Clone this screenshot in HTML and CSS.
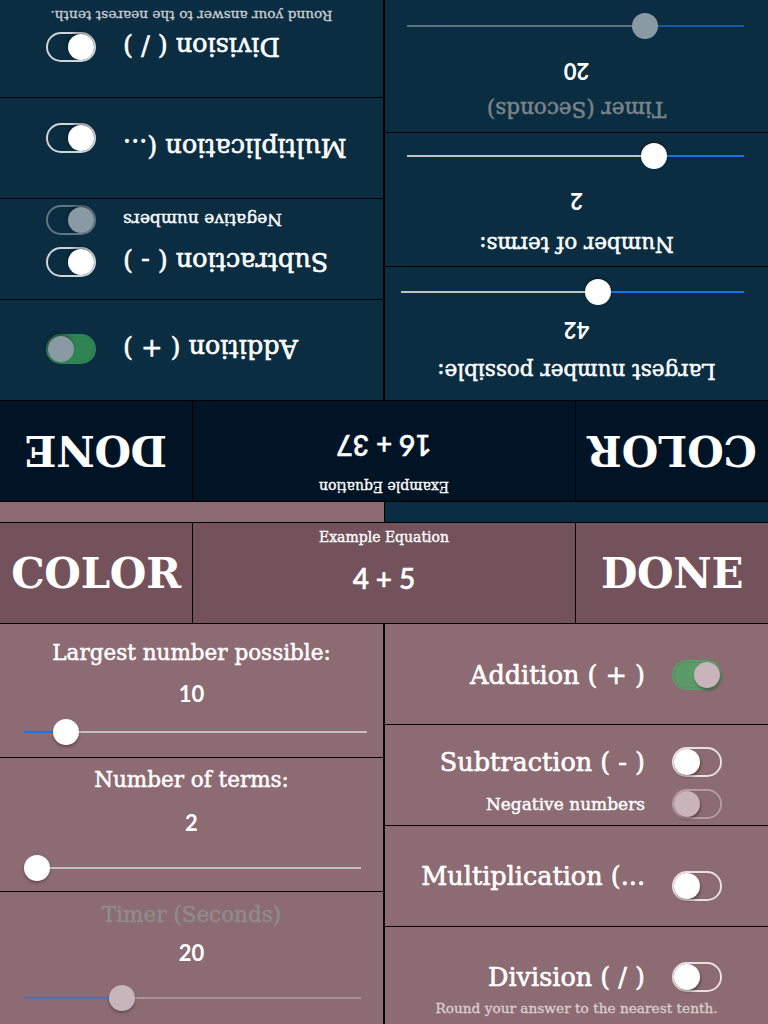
FILE: index.html
```html
<!DOCTYPE html>
<html>
<head>
<meta charset="utf-8">
<link rel="stylesheet" href="styles.css">
</head>
<body>
<div class="screen">
  <div class="half half--top">
    <div class="header">
      <div class="hbtn">COLOR</div>
      <div class="heq"><div class="heq-label">Example Equation</div><div class="heq-value">16 + 37</div></div>
      <div class="hbtn">DONE</div>
    </div>
    <div class="body">
      <div class="col col--sliders">
        <div class="scell scell--a">
          <div class="slabel">Largest number possible:</div>
          <div class="svalue">42</div>
          <div class="slider slider--wide"><div class="track"></div><div class="fill" style="width:146px"></div><div class="thumb" style="left:146px"></div></div>
        </div>
        <div class="scell scell--b">
          <div class="slabel">Number of terms:</div>
          <div class="svalue">2</div>
          <div class="slider"><div class="track"></div><div class="fill" style="width:90px"></div><div class="thumb" style="left:90px"></div></div>
        </div>
        <div class="scell scell--c">
          <div class="slabel slabel--off">Timer (Seconds)</div>
          <div class="svalue">20</div>
          <div class="slider slider--off"><div class="track"></div><div class="fill" style="width:99px"></div><div class="thumb" style="left:99px"></div></div>
        </div>
      </div>
      <div class="col col--toggles">
        <div class="tcell tcell--add">
          <div class="trow"><span class="tlabel">Addition ( + )</span><span class="toggle toggle--on"><span class="knob"></span></span></div>
        </div>
        <div class="tcell tcell--sub">
          <div class="trow"><span class="tlabel">Subtraction ( - )</span><span class="toggle"><span class="knob"></span></span></div>
          <div class="trow trow--sub"><span class="tsub">Negative numbers</span><span class="toggle toggle--off"><span class="knob"></span></span></div>
        </div>
        <div class="tcell tcell--mul">
          <div class="trow trow--mul"><span class="tlabel">Multiplication (...</span><span class="toggle"><span class="knob"></span></span></div>
        </div>
        <div class="tcell tcell--div">
          <div class="trow"><span class="tlabel">Division ( / )</span><span class="toggle"><span class="knob"></span></span></div>
          <div class="tnote">Round your answer to the nearest tenth.</div>
        </div>
      </div>
    </div>
  </div>

  <div class="seam"><div class="seam-l"></div><div class="seam-r"></div></div>

  <div class="half half--bottom">
    <div class="header">
      <div class="hbtn">COLOR</div>
      <div class="heq"><div class="heq-label">Example Equation</div><div class="heq-value">4 + 5</div></div>
      <div class="hbtn">DONE</div>
    </div>
    <div class="body">
      <div class="col col--sliders">
        <div class="scell scell--a">
          <div class="slabel">Largest number possible:</div>
          <div class="svalue">10</div>
          <div class="slider slider--wide"><div class="track"></div><div class="fill" style="width:42px"></div><div class="thumb" style="left:42px"></div></div>
        </div>
        <div class="scell scell--b">
          <div class="slabel">Number of terms:</div>
          <div class="svalue">2</div>
          <div class="slider"><div class="track"></div><div class="fill" style="width:13px"></div><div class="thumb" style="left:13px"></div></div>
        </div>
        <div class="scell scell--c">
          <div class="slabel slabel--off">Timer (Seconds)</div>
          <div class="svalue">20</div>
          <div class="slider slider--off"><div class="track"></div><div class="fill" style="width:98px"></div><div class="thumb" style="left:98px"></div></div>
        </div>
      </div>
      <div class="col col--toggles">
        <div class="tcell tcell--add">
          <div class="trow"><span class="tlabel">Addition ( + )</span><span class="toggle toggle--on"><span class="knob"></span></span></div>
        </div>
        <div class="tcell tcell--sub">
          <div class="trow"><span class="tlabel">Subtraction ( - )</span><span class="toggle"><span class="knob"></span></span></div>
          <div class="trow trow--sub"><span class="tsub">Negative numbers</span><span class="toggle toggle--off"><span class="knob"></span></span></div>
        </div>
        <div class="tcell tcell--mul">
          <div class="trow trow--mul"><span class="tlabel">Multiplication (...</span><span class="toggle"><span class="knob"></span></span></div>
        </div>
        <div class="tcell tcell--div">
          <div class="trow"><span class="tlabel">Division ( / )</span><span class="toggle"><span class="knob"></span></span></div>
          <div class="tnote">Round your answer to the nearest tenth.</div>
        </div>
      </div>
    </div>
  </div>
</div>
</body>
</html>
```

FILE: styles.css
```css
* { box-sizing: border-box; margin: 0; padding: 0; }

html, body {
  width: 768px;
  height: 1024px;
  overflow: hidden;
}

body {
  font-family: "DejaVu Serif", "Liberation Serif", serif;
  color: #fff;
}

.screen {
  display: flex;
  flex-direction: column;
  height: 1024px;
}

.half {
  height: 502px;
  overflow: hidden;
  flex: none;
}

.half--top {
  transform: rotate(180deg);
  background: #0b2d41;
}

.half--bottom {
  background: #8d6b73;
}

.seam {
  height: 20px;
  display: flex;
  flex: none;
}

.seam-l {
  width: 384px;
  background: #8d6b73;
}

.seam-r {
  flex: 1;
  background: #0b2d41;
  border-left: 1px solid #000;
}

/* header */
.header {
  display: flex;
  height: 102px;
  border-top: 1px solid #000;
  border-bottom: 1px solid #000;
}

.half--top .header { background: #011426; }
.half--bottom .header { background: #74525b; }

.hbtn {
  width: 192px;
  display: flex;
  align-items: center;
  justify-content: center;
  font-size: 42px;
  font-weight: bold;
  letter-spacing: -0.3px;
}

.heq {
  width: 384px;
  border-left: 1px solid #000;
  border-right: 1px solid #000;
  display: flex;
  flex-direction: column;
  align-items: center;
  padding-top: 6px;
}

.heq-label {
  font-size: 14px;
  line-height: 16px;
  -webkit-text-stroke: 0.35px currentColor;
}

.heq-value {
  font-family: "Lato", "DejaVu Sans", sans-serif;
  font-weight: 600;
  font-size: 28px;
  line-height: 30px;
  margin-top: 18px;
  -webkit-text-stroke: 0.4px currentColor;
}

/* body */
.body {
  display: flex;
}

.col {
  width: 384px;
  flex: none;
}

.col--sliders { border-right: 1px solid #000; }
.col--toggles { border-left: 1px solid #000; }

/* slider cells */
.scell {
  height: 134px;
  border-bottom: 1px solid #000;
  display: flex;
  flex-direction: column;
  align-items: stretch;
}

.slabel {
  font-size: 21.5px;
  line-height: 24px;
  text-align: center;
  -webkit-text-stroke: 0.5px currentColor;
}

.slabel--off { color: #8f8b8b; }
.half--top .slabel--off { color: #7b8489; }

.svalue {
  font-family: "Lato", "DejaVu Sans", sans-serif;
  font-weight: bold;
  font-size: 22px;
  line-height: 24px;
  text-align: center;
}

.scell--a { padding-top: 17px; }
.scell--a .svalue { margin-top: 17px; }
.scell--a .slider { margin-top: 13px; }

.scell--b { padding-top: 10px; }
.scell--b .svalue { margin-top: 19px; }
.scell--b .slider { margin-top: 20px; }

.scell--c { padding-top: 11px; }
.scell--c .svalue { margin-top: 14px; }
.scell--c .slider { margin-top: 20px; }

.slider {
  position: relative;
  height: 26px;
  margin-left: 24px;
  margin-right: 22px;
}

.slider--wide { margin-right: 16px; }

.track {
  position: absolute;
  left: 0;
  right: 0;
  top: 12px;
  height: 2px;
  background: #c2c0c1;
}

.fill {
  position: absolute;
  left: 0;
  top: 12px;
  height: 2px;
  background: #1a73e8;
}

.thumb {
  position: absolute;
  top: 0;
  width: 26px;
  height: 26px;
  margin-left: -13px;
  border-radius: 50%;
  background: #fff;
  box-shadow: 0 2px 3px rgba(0, 0, 0, 0.3);
}

.slider--off .track { background: #a8929a; }
.slider--off .fill { background: #4a71b5; }
.slider--off .thumb { background: #c8b5bb; }

.half--top .slider--off .track { background: #5d717c; }
.half--top .slider--off .fill { background: #1559a8; }
.half--top .slider--off .thumb { background: #8a9aa4; box-shadow: none; }

/* toggle cells */
.tcell {
  height: 101px;
  border-bottom: 1px solid #000;
  display: flex;
  flex-direction: column;
  align-items: stretch;
}

.trow {
  display: flex;
  justify-content: flex-end;
  align-items: center;
  gap: 27px;
  padding-right: 46px;
}

.tlabel {
  font-size: 25.5px;
  line-height: 30px;
  white-space: nowrap;
  -webkit-text-stroke: 0.6px currentColor;
}

.tsub {
  font-size: 17px;
  line-height: 30px;
  -webkit-text-stroke: 0.4px currentColor;
}

.tnote {
  font-size: 13.7px;
  line-height: 16px;
  text-align: center;
  color: #dccfd2;
  margin-top: 8px;
  -webkit-text-stroke: 0.3px currentColor;
}

.half--top .tnote { color: #c9d0d4; }

.tcell--add { padding-top: 36px; }
.tcell--sub { padding-top: 22px; }
.trow--sub { margin-top: 12px; }
.tcell--mul { padding-top: 35px; }
.trow--mul { align-items: flex-start; }
.trow--mul .toggle { margin-top: 10px; }
.tcell--div { padding-top: 35px; }

.toggle {
  position: relative;
  flex: none;
  width: 50px;
  height: 30px;
  border-radius: 15px;
  border: 2px solid rgba(255, 255, 255, 0.8);
  box-shadow: inset 0 0 1px rgba(0, 0, 0, 0.4);
}

.knob {
  position: absolute;
  top: 0;
  left: 0;
  width: 26px;
  height: 26px;
  border-radius: 50%;
  background: #fff;
  box-shadow: 1px 2px 3px rgba(0, 0, 0, 0.35);
}

.toggle--on {
  background: #5d9a69;
  border-color: #5d9a69;
}

.toggle--on .knob {
  left: auto;
  right: 0;
  background: #c8b4ba;
}

.toggle--off {
  border-color: rgba(255, 255, 255, 0.35);
}

.toggle--off .knob {
  background: #c8b4ba;
}

.half--top .toggle--on {
  background: #2e8553;
  border-color: #2e8553;
}

.half--top .toggle--on .knob,
.half--top .toggle--off .knob {
  background: #8a9aa4;
}
```
